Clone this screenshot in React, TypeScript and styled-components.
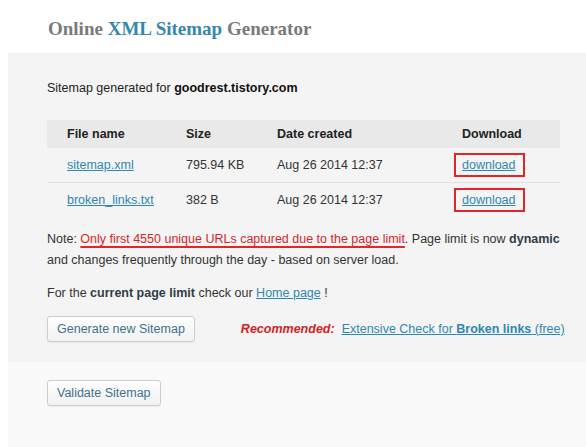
import React from 'react';
import styled, { createGlobalStyle } from 'styled-components';

const GlobalStyle = createGlobalStyle`
  body {
    margin: 0;
    background: #fff;
    font-family: "Liberation Sans", Arial, sans-serif;
    font-size: 12.5px;
    color: #333;
  }
`;

const Page = styled.div`
  padding-left: 8px;
  overflow: hidden;
`;

const Header = styled.div`
  height: 53px;
  padding-left: 40px;
  box-sizing: border-box;
  padding-top: 17px;
`;

const Title = styled.h1`
  margin: 0;
  font-family: "Liberation Serif", "Times New Roman", serif;
  font-size: 19px;
  line-height: 24px;
  font-weight: bold;
  color: #7a7a7a;
`;

const Accent = styled.span`
  color: #3688ab;
`;

const Panel = styled.div<{ $tone: 'dark' | 'light' }>`
  background: ${(p) => (p.$tone === 'dark' ? '#f4f4f4' : '#f9f9f9')};
  padding: ${(p) => (p.$tone === 'dark' ? '27px 26px 20px 39px' : '18px 26px 42px 39px')};
`;

const Intro = styled.p`
  margin: 0 0 24px;
  line-height: 16px;
  color: #222;

  b {
    color: #111;
  }
`;

const Table = styled.table`
  width: 513px;
  table-layout: fixed;
  border-collapse: collapse;
`;

const Th = styled.th<{ $w: number }>`
  box-sizing: border-box;
  width: ${(p) => p.$w}px;
  height: 28px;
  padding: 0 0 0 20px;
  text-align: left;
  background: #e9e9e9;
  font-weight: bold;
  color: #222;
`;

const Row = styled.tr`
  & + & td {
    border-top: 1px solid #e2e2e2;
  }
`;

const Td = styled.td<{ $pad?: number }>`
  height: 34px;
  padding: 0 0 0 ${(p) => p.$pad ?? 20}px;
  color: #333;
  white-space: nowrap;
`;

const Link = styled.a`
  color: #2f88b1;
  text-decoration: underline;
  cursor: pointer;
  white-space: nowrap;
`;

const Marked = styled.span`
  display: inline-block;
  padding: 3px 7px 3px 6px;
  border: 2px solid #e0262c;
  line-height: 14px;
`;

const Paragraph = styled.p`
  margin: 12px 0 0;
  line-height: 21px;
  color: #333;
  white-space: nowrap;

  b {
    color: #2f3d47;
  }
`;

const Alert = styled.span`
  color: #d9262b;
  text-decoration: underline;
  text-decoration-color: #e3262b;
  text-decoration-thickness: 2px;
  text-underline-offset: 3px;
`;

const Actions = styled.div`
  display: flex;
  align-items: center;
  margin-top: 12px;
  white-space: nowrap;
`;

const Button = styled.button`
  height: 26px;
  padding: 0 9px;
  font-family: "Liberation Sans", Arial, sans-serif;
  font-size: 12.5px;
  color: #3f7289;
  background: linear-gradient(#fefefe, #f1f1f1);
  border: 1px solid #cdcdcd;
  border-radius: 3px;
  box-shadow: 0 1px 1px rgba(0, 0, 0, 0.06);
  white-space: nowrap;
  cursor: pointer;
`;

const Recommended = styled.span`
  margin-left: 46px;
  margin-right: 7px;
  color: #d01f26;
  font-weight: bold;
  font-style: italic;
`;

export default function App() {
  return (
    <>
      <GlobalStyle />
      <Page>
        <Header>
          <Title>
            Online <Accent>XML Sitemap</Accent> Generator
          </Title>
        </Header>
        <Panel $tone="dark">
          <Intro>
            Sitemap generated for <b>goodrest.tistory.com</b>
          </Intro>
          <Table>
            <thead>
              <tr>
                <Th $w={119}>File name</Th>
                <Th $w={91}>Size</Th>
                <Th $w={185}>Date created</Th>
                <Th $w={118}>Download</Th>
              </tr>
            </thead>
            <tbody>
              <Row>
                <Td><Link>sitemap.xml</Link></Td>
                <Td>795.94 KB</Td>
                <Td>Aug 26 2014 12:37</Td>
                <Td $pad={12}><Marked><Link>download</Link></Marked></Td>
              </Row>
              <Row>
                <Td><Link>broken_links.txt</Link></Td>
                <Td>382 B</Td>
                <Td>Aug 26 2014 12:37</Td>
                <Td $pad={12}><Marked><Link>download</Link></Marked></Td>
              </Row>
            </tbody>
          </Table>
          <Paragraph>
            Note: <Alert>Only first 4550 unique URLs captured due to the page limit</Alert>. Page limit is now <b>dynamic</b>
            <br />
            and changes frequently through the day - based on server load.
          </Paragraph>
          <Paragraph>
            For the <b>current page limit</b> check our <Link>Home page</Link> !
          </Paragraph>
          <Actions>
            <Button>Generate new Sitemap</Button>
            <Recommended>Recommended:</Recommended>
            <Link>
              Extensive Check for <b>Broken links</b> (free)
            </Link>
          </Actions>
        </Panel>
        <Panel $tone="light">
          <Button>Validate Sitemap</Button>
        </Panel>
      </Page>
    </>
  );
}
